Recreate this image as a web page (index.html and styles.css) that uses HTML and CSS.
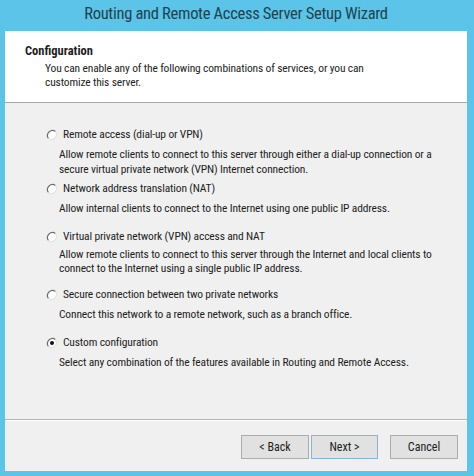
FILE: index.html
```html
<!DOCTYPE html>
<html>
<head>
<meta charset="utf-8">
<link rel="stylesheet" href="styles.css">
</head>
<body>
<div class="window">
  <div class="titlebar">Routing and Remote Access Server Setup Wizard</div>
  <div class="client">
    <div class="header">
      <div class="h-title">Configuration</div>
      <div class="h-sub">You can enable any of the following combinations of services, or you can<br>customize this server.</div>
    </div>
    <div class="body">
      <div class="opt opt1">
        <div class="opt-label"><svg class="radio" width="12" height="12" viewBox="0 0 12 12"><circle cx="6" cy="6" r="5" fill="#fff"/><path d="M2.5 9.5 A5 5 0 0 1 9.5 2.5" fill="none" stroke="#6e6e6e" stroke-width="1.2"/><path d="M9.5 2.5 A5 5 0 0 1 2.5 9.5" fill="none" stroke="#e4e4e4" stroke-width="1.2"/></svg><span>Remote access (dial-up or VPN)</span></div>
        <div class="opt-desc">Allow remote clients to connect to this server through either a dial-up connection or a<br>secure virtual private network (VPN) Internet connection.</div>
      </div>
      <div class="opt opt2">
        <div class="opt-label"><svg class="radio" width="12" height="12" viewBox="0 0 12 12"><circle cx="6" cy="6" r="5" fill="#fff"/><path d="M2.5 9.5 A5 5 0 0 1 9.5 2.5" fill="none" stroke="#6e6e6e" stroke-width="1.2"/><path d="M9.5 2.5 A5 5 0 0 1 2.5 9.5" fill="none" stroke="#e4e4e4" stroke-width="1.2"/></svg><span>Network address translation (NAT)</span></div>
        <div class="opt-desc">Allow internal clients to connect to the Internet using one public IP address.</div>
      </div>
      <div class="opt opt3">
        <div class="opt-label"><svg class="radio" width="12" height="12" viewBox="0 0 12 12"><circle cx="6" cy="6" r="5" fill="#fff"/><path d="M2.5 9.5 A5 5 0 0 1 9.5 2.5" fill="none" stroke="#6e6e6e" stroke-width="1.2"/><path d="M9.5 2.5 A5 5 0 0 1 2.5 9.5" fill="none" stroke="#e4e4e4" stroke-width="1.2"/></svg><span>Virtual private network (VPN) access and NAT</span></div>
        <div class="opt-desc">Allow remote clients to connect to this server through the Internet and local clients to<br>connect to the Internet using a single public IP address.</div>
      </div>
      <div class="opt opt4">
        <div class="opt-label"><svg class="radio" width="12" height="12" viewBox="0 0 12 12"><circle cx="6" cy="6" r="5" fill="#fff"/><path d="M2.5 9.5 A5 5 0 0 1 9.5 2.5" fill="none" stroke="#6e6e6e" stroke-width="1.2"/><path d="M9.5 2.5 A5 5 0 0 1 2.5 9.5" fill="none" stroke="#e4e4e4" stroke-width="1.2"/></svg><span>Secure connection between two private networks</span></div>
        <div class="opt-desc">Connect this network to a remote network, such as a branch office.</div>
      </div>
      <div class="opt opt5">
        <div class="opt-label"><svg class="radio" width="12" height="12" viewBox="0 0 12 12"><circle cx="6" cy="6" r="5" fill="#fff"/><path d="M2.5 9.5 A5 5 0 0 1 9.5 2.5" fill="none" stroke="#6e6e6e" stroke-width="1.2"/><path d="M9.5 2.5 A5 5 0 0 1 2.5 9.5" fill="none" stroke="#e4e4e4" stroke-width="1.2"/><circle cx="6" cy="6" r="2" fill="#111"/></svg><span>Custom configuration</span></div>
        <div class="opt-desc">Select any combination of the features available in Routing and Remote Access.</div>
      </div>
    </div>
    <div class="footer">
      <div class="btn">&lt; Back</div>
      <div class="btn btn-default">Next &gt;</div>
      <div class="btn btn-cancel">Cancel</div>
    </div>
  </div>
</div>
</body>
</html>
```
FILE: styles.css
```css
html, body {
  margin: 0;
  padding: 0;
}
body {
  background: #5cc4e8;
  width: 474px;
  height: 476px;
  overflow: hidden;
  font-family: Roboto, "Liberation Sans", Arial, sans-serif;
  font-stretch: 75%;
  color: #1e1e1e;
}
.window {
  display: flex;
  flex-direction: column;
  height: 476px;
  padding: 0 7px 5px 5px;
  box-sizing: border-box;
}
.titlebar {
  height: 31px;
  flex: none;
  display: flex;
  align-items: center;
  justify-content: center;
  font-size: 16.5px;
  letter-spacing: -0.3px;
  color: #1c4352;
  padding-bottom: 4px;
  box-sizing: border-box;
}
.client {
  flex: 1;
  display: flex;
  flex-direction: column;
  background: #f0f0f0;
}
.header {
  height: 72px;
  flex: none;
  background: #fff;
  border-bottom: 1px solid #a8a8a8;
  box-sizing: border-box;
  padding: 12px 0 0 20px;
}
.h-title {
  font-weight: bold;
  font-size: 12.5px;
  line-height: 16px;
}
.h-sub {
  font-size: 11.5px;
  letter-spacing: -0.15px;
  line-height: 14px;
  padding-left: 20px;
  margin-top: 2px;
}
.body {
  flex: 1;
  padding: 23px 0 0 41px;
  border-bottom: 1px solid #b4b4b4;
  box-shadow: 0 1px 0 #fff;
  font-size: 11.5px;
  letter-spacing: -0.15px;
}
.opt-label {
  display: flex;
  align-items: center;
  height: 17px;
  line-height: 17px;
}
.radio {
  flex: none;
  margin-right: 5px;
}
.opt-desc {
  margin-top: 4px;
  padding-left: 13px;
  line-height: 15px;
  white-space: nowrap;
}
.opt3 .opt-desc {
  margin-top: 2px;
  line-height: 14px;
}
.opt1 { margin-bottom: 3px; }
.opt2 { margin-bottom: 12px; }
.opt3 { margin-bottom: 11px; }
.opt4 { margin-bottom: 12px; }
.footer {
  height: 51px;
  flex: none;
  display: flex;
  justify-content: flex-end;
  align-items: flex-start;
  padding: 15px 9px 0 0;
  box-sizing: border-box;
  gap: 2px;
}
.btn {
  width: 68px;
  height: 24px;
  box-sizing: border-box;
  border: 1px solid #acacac;
  background: #e1e1e1;
  font-size: 12px;
  display: flex;
  align-items: center;
  justify-content: center;
}
.btn-default {
  border-color: #8ab3da;
  width: 67px;
}
.btn-cancel {
  margin-left: 10px;
}
```
